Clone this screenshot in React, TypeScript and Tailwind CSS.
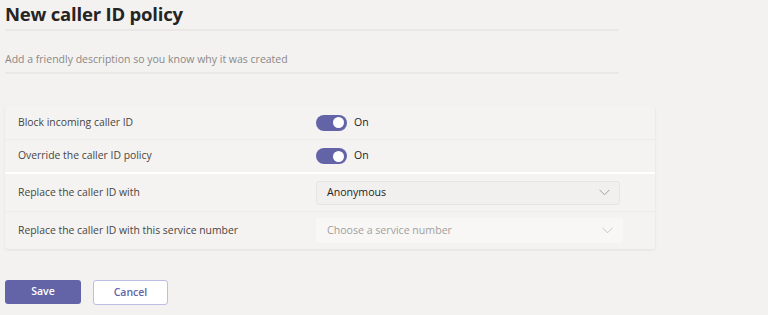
import React from "react";

interface Row {
  label: string;
  kind: "toggle" | "select" | "placeholder";
  value: string;
}

const rows: Row[] = [
  { label: "Block incoming caller ID", kind: "toggle", value: "On" },
  { label: "Override the caller ID policy", kind: "toggle", value: "On" },
  { label: "Replace the caller ID with", kind: "select", value: "Anonymous" },
  {
    label: "Replace the caller ID with this service number",
    kind: "placeholder",
    value: "Choose a service number",
  },
];

const Chevron: React.FC<{ color: string }> = ({ color }) => (
  <svg width="11" height="7" viewBox="0 0 11 7" fill="none">
    <path d="M0.5 0.8 L5.5 5.8 L10.5 0.8" stroke={color} strokeWidth="1" />
  </svg>
);

const Toggle: React.FC<{ label: string }> = ({ label }) => (
  <div className="flex items-center gap-[7px]">
    <div className="w-[31px] h-[16px] rounded-full bg-[#6264a7] flex items-center justify-end pr-[3px]">
      <div className="w-[11px] h-[11px] rounded-full bg-white" />
    </div>
    <span className="text-[10.5px] text-[#252423]">{label}</span>
  </div>
);

const App: React.FC = () => {
  return (
    <div
      className="w-[768px] h-[315px] bg-[#f3f2f1] overflow-hidden pl-[5px]"
      style={{ fontFamily: '"Open Sans", "Noto Sans", sans-serif' }}
    >
      {/* header */}
      <div className="w-[614px] h-[31px] flex items-center border-b-2 border-[#e9e8e7]">
        <h1 className="text-[18.5px] font-bold text-[#252423] leading-none tracking-[-0.2px]">
          New caller ID policy
        </h1>
      </div>
      <div className="w-[614px] pt-[20px] pb-[5px] border-b-2 border-[#e9e8e7]">
        <p className="text-[10.5px] leading-[16px] text-[#8a8886]">
          Add a friendly description so you know why it was created
        </p>
      </div>

      {/* settings card */}
      <div className="mt-[32px] w-[650px] bg-[#f4f3f2] rounded-[3px] shadow-[0_1px_3px_rgba(0,0,0,0.08)]">
        {rows.map((row, i) => (
          <div
            key={row.label}
            className={
              i === 1
                ? "flex items-center h-[34px] border-b-2 border-white"
                : i === 3
                ? "flex items-center h-[37px]"
                : i === 2
                ? "flex items-center h-[38px] border-b border-[#ecebea]"
                : "flex items-center h-[34px] border-b border-[#ecebea]"
            }
          >
            <div className="w-[311px] pl-[13px] text-[10.4px] text-[#484644]">{row.label}</div>
            {row.kind === "toggle" && <Toggle label={row.value} />}
            {row.kind === "select" && (
              <div className="w-[304px] h-[24px] bg-[#f1f0ef] border border-[#e6e5e4] rounded-[3px] flex items-center justify-between pl-[10px] pr-[9px]">
                <span className="text-[10.6px] text-[#252423]">{row.value}</span>
                <Chevron color="#a19f9d" />
              </div>
            )}
            {row.kind === "placeholder" && (
              <div className="w-[307px] h-[25px] bg-[#f8f7f6] rounded-[3px] flex items-center justify-between pl-[11px] pr-[10px]">
                <span className="text-[10.6px] text-[#a19f9d]">{row.value}</span>
                <Chevron color="#c8c6c4" />
              </div>
            )}
          </div>
        ))}
      </div>

      {/* actions */}
      <div className="mt-[31px] flex gap-[12px]">
        <button className="w-[76px] h-[24px] rounded-[3px] bg-[#6264a7] text-white text-[10.5px] font-semibold">
          Save
        </button>
        <button className="w-[75px] h-[25px] rounded-[3px] border border-[#bdbde6] bg-white text-[#6264a7] text-[10.5px] font-semibold">
          Cancel
        </button>
      </div>
    </div>
  );
};

export default App;
